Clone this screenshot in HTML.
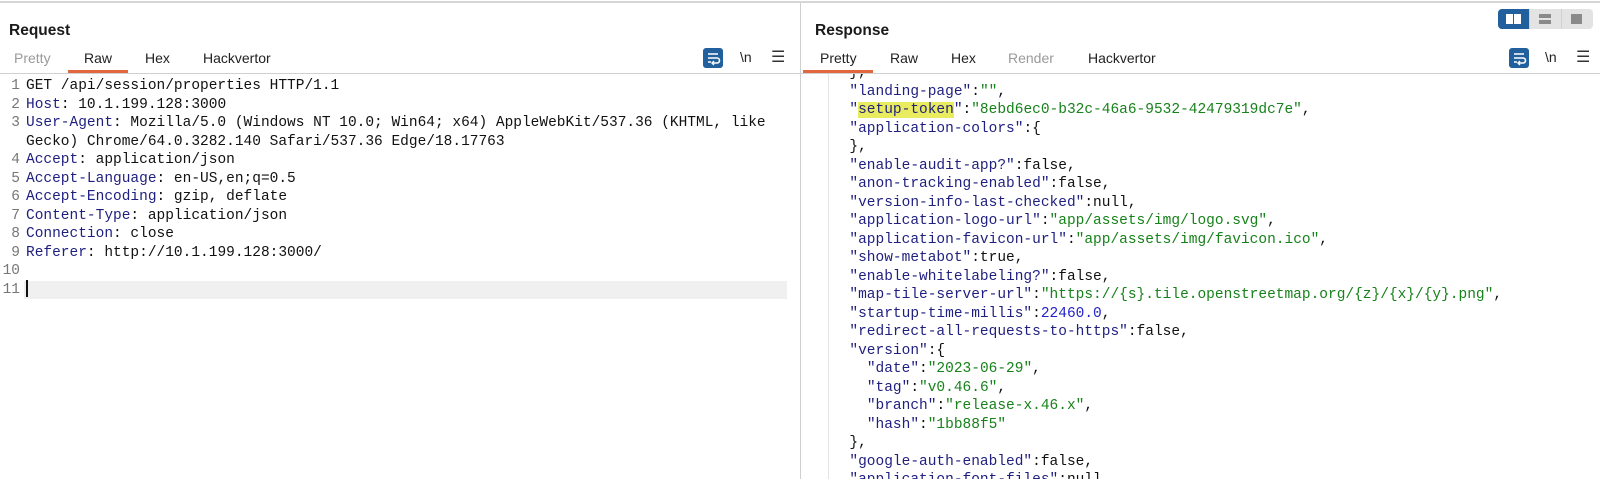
<!DOCTYPE html>
<html><head><meta charset="utf-8"><style>
*{margin:0;padding:0;box-sizing:border-box}
body{width:1600px;height:479px;overflow:hidden;background:#fff;position:relative;font-family:"Liberation Sans",sans-serif;color:#1a1a1a}
.abs{position:absolute}
.topline{left:0;top:1px;width:1600px;height:2px;background:#d6d6d6}
.title{font-weight:bold;font-size:15.5px;top:22px}
.tab{font-size:14px;top:50px;color:#222}
.gray{color:#9a9a9a}
.ul{height:3px;background:#e2673f;top:70px}
.hl{height:1px;background:#d0d0d0;top:73px}
.code{font-family:"Liberation Mono",monospace;font-size:14.5px;line-height:18.5px;white-space:pre;color:#111}
.k{color:#1f1f80}.s{color:#17821a}.n{color:#2323c8}
.ln{color:#777;text-align:right;width:20px}
.wrap{width:20px;height:20px;background:#21609c;border-radius:3px}
.nl{font-family:"Liberation Sans",sans-serif;font-size:14px;color:#222}
.menu{font-size:16px;color:#333}
</style></head><body>
<div class="abs topline"></div>
<div class="abs" style="left:800px;top:3px;width:1px;height:476px;background:#cfcfcf"></div>

<!-- Request -->
<div class="abs title" style="left:9px">Request</div>
<div class="abs tab gray" style="left:14px">Pretty</div>
<div class="abs tab" style="left:84px">Raw</div>
<div class="abs tab" style="left:145px">Hex</div>
<div class="abs tab" style="left:203px">Hackvertor</div>
<div class="abs ul" style="left:68px;width:60px"></div>
<div class="abs hl" style="left:0;width:800px"></div>
<div class="abs wrap" style="left:703px;top:48px"><svg width="20" height="20" viewBox="0 0 20 20"><path d="M5 6h10M5 10h9a2.5 2.5 0 0 1 0 5h-4M5 14h3" stroke="#fff" stroke-width="1.6" fill="none"/><path d="M11 13l-2 2 2 2" stroke="#fff" stroke-width="1.4" fill="none"/></svg></div>
<div class="abs nl" style="left:740px;top:49px">\n</div>
<div class="abs menu" style="left:771px;top:47px">☰</div>

<div class="abs" style="left:24px;top:281px;width:763px;height:18px;background:#f0f0f0"></div>
<div class="abs" style="left:26px;top:280px;width:2px;height:17px;background:#111"></div>
<div class="abs code ln" style="left:0;top:77px">1
2
3

4
5
6
7
8
9
10
11</div>
<div class="abs code" style="left:26px;top:77px">GET /api/session/properties HTTP/1.1
<span class="k">Host</span>: 10.1.199.128:3000
<span class="k">User-Agent</span>: Mozilla/5.0 (Windows NT 10.0; Win64; x64) AppleWebKit/537.36 (KHTML, like
Gecko) Chrome/64.0.3282.140 Safari/537.36 Edge/18.17763
<span class="k">Accept</span>: application/json
<span class="k">Accept-Language</span>: en-US,en;q=0.5
<span class="k">Accept-Encoding</span>: gzip, deflate
<span class="k">Content-Type</span>: application/json
<span class="k">Connection</span>: close
<span class="k">Referer</span>: http://10.1.199.128:3000/</div>

<!-- Response -->
<div class="abs title" style="left:815px">Response</div>
<div class="abs" style="left:1498px;top:9px;width:95px;height:20px;background:#e3e3e3;border-radius:4px;overflow:hidden">
 <div class="abs" style="left:0;top:0;width:31px;height:20px;background:#21609c"></div>
 <div class="abs" style="left:8px;top:5px;width:7px;height:10px;background:#fff"></div>
 <div class="abs" style="left:16px;top:5px;width:7px;height:10px;background:#fff"></div>
 <div class="abs" style="left:31px;top:0;width:1px;height:20px;background:#d0d0d0"></div>
 <div class="abs" style="left:63px;top:0;width:1px;height:20px;background:#d0d0d0"></div>
 <div class="abs" style="left:41px;top:5px;width:12px;height:4px;background:#8a8a8a"></div>
 <div class="abs" style="left:41px;top:11px;width:12px;height:4px;background:#8a8a8a"></div>
 <div class="abs" style="left:73px;top:5px;width:11px;height:10px;background:#8a8a8a"></div>
</div>
<div class="abs tab" style="left:820px">Pretty</div>
<div class="abs tab" style="left:890px">Raw</div>
<div class="abs tab" style="left:951px">Hex</div>
<div class="abs tab gray" style="left:1008px">Render</div>
<div class="abs tab" style="left:1088px">Hackvertor</div>
<div class="abs ul" style="left:803px;width:70px"></div>
<div class="abs hl" style="left:801px;width:799px"></div>
<div class="abs wrap" style="left:1509px;top:48px"><svg width="20" height="20" viewBox="0 0 20 20"><path d="M5 6h10M5 10h9a2.5 2.5 0 0 1 0 5h-4M5 14h3" stroke="#fff" stroke-width="1.6" fill="none"/><path d="M11 13l-2 2 2 2" stroke="#fff" stroke-width="1.4" fill="none"/></svg></div>
<div class="abs nl" style="left:1545px;top:49px">\n</div>
<div class="abs menu" style="left:1576px;top:47px">☰</div>

<div class="abs" style="left:828px;top:74px;width:1px;height:405px;background:#e4e4e4"></div>
<div class="abs" style="left:801px;top:74px;width:799px;height:405px;overflow:hidden">
<div class="abs code" style="left:31px;top:-10px">  },
  <span class="k">"landing-page"</span>:<span class="s">""</span>,
  <span class="k">"<span style="background:#e9ec5e">setup-token</span>"</span>:<span class="s">"8ebd6ec0-b32c-46a6-9532-42479319dc7e"</span>,
  <span class="k">"application-colors"</span>:{
  },
  <span class="k">"enable-audit-app?"</span>:false,
  <span class="k">"anon-tracking-enabled"</span>:false,
  <span class="k">"version-info-last-checked"</span>:null,
  <span class="k">"application-logo-url"</span>:<span class="s">"app/assets/img/logo.svg"</span>,
  <span class="k">"application-favicon-url"</span>:<span class="s">"app/assets/img/favicon.ico"</span>,
  <span class="k">"show-metabot"</span>:true,
  <span class="k">"enable-whitelabeling?"</span>:false,
  <span class="k">"map-tile-server-url"</span>:<span class="s">"https://{s}.tile.openstreetmap.org/{z}/{x}/{y}.png"</span>,
  <span class="k">"startup-time-millis"</span>:<span class="n">22460.0</span>,
  <span class="k">"redirect-all-requests-to-https"</span>:false,
  <span class="k">"version"</span>:{
    <span class="k">"date"</span>:<span class="s">"2023-06-29"</span>,
    <span class="k">"tag"</span>:<span class="s">"v0.46.6"</span>,
    <span class="k">"branch"</span>:<span class="s">"release-x.46.x"</span>,
    <span class="k">"hash"</span>:<span class="s">"1bb88f5"</span>
  },
  <span class="k">"google-auth-enabled"</span>:false,
  <span class="k">"application-font-files"</span>:null,</div>
</div>
</body></html>
